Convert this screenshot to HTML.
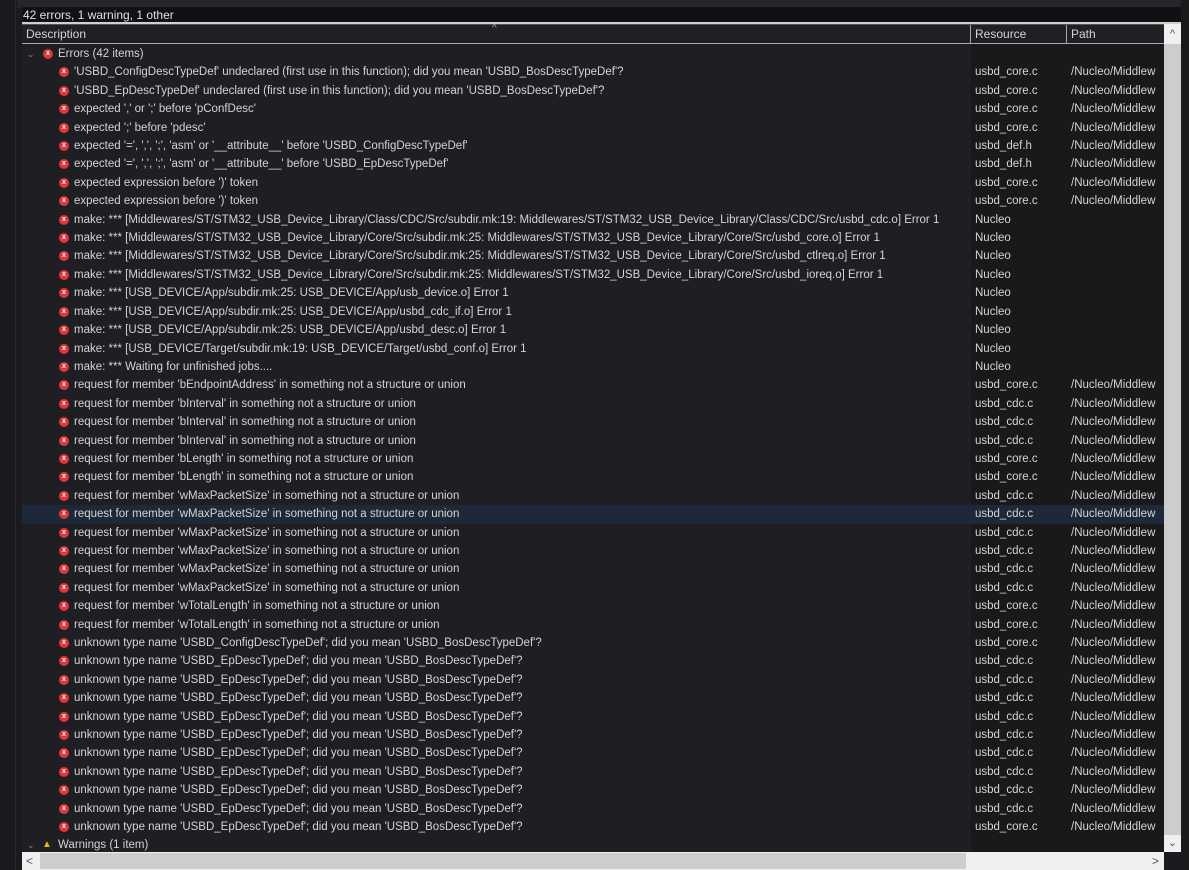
<!DOCTYPE html><html><head><meta charset="utf-8"><style>
*{margin:0;padding:0;box-sizing:border-box}
body{width:1189px;height:870px;background:#1b1b1f;font-family:"Liberation Sans",sans-serif;font-size:12px;color:#d4d4d4;position:relative;overflow:hidden}
.abs{position:absolute}
#left{left:0;top:0;width:16px;height:870px;background:#1a1a1d;border-right:1px solid #2c2c30}
#tabs{left:17px;top:0;width:1172px;height:8px;background:#26262a}
#status{left:22px;top:7px;width:1159px;height:16px;background:#111113;line-height:16px;padding-left:1px;color:#e0e0e0}
#line{left:22px;top:22px;width:1159px;height:2px;background:#d0d0d0}
#hdr{left:22px;top:24px;width:1142px;height:20px;background:#202024;border-bottom:1px solid #a8a8a8;border-top:1px solid #555}
.h{position:absolute;top:0;height:19px;line-height:19px;padding-left:4px;border-right:1px solid #a8a8a8}
#body{left:22px;top:44px;width:1142px;height:808px;background:#1f1f23;overflow:hidden}
#rescol{left:949px;top:0;width:193px;height:808px;background:#19191c}
.r{position:relative;height:18.42px;line-height:18px;white-space:nowrap;font-size:11.5px}
.r span{position:absolute;top:0}
.d{left:52px;max-width:895px;overflow:hidden}.rs{left:953px}.p{left:1049px}
.ic{position:absolute;width:10px;height:10px;border-radius:50%;background:#e0353d;top:4px;left:37px;color:#fff;font-size:7px;line-height:10px;text-align:center;font-weight:bold}
.sel{background:#1d2838}
#vs{left:1164px;top:24px;width:17px;height:828px;background:#cdcdcd}
#vsu{left:1164px;top:24px;width:17px;height:20px;background:#f0f0f0;color:#555;text-align:center;line-height:20px;font-size:11px}
#vsd{left:1164px;top:835px;width:17px;height:17px;background:#f0f0f0;color:#555;text-align:center;line-height:17px;font-size:11px}
#hs{left:22px;top:852px;width:1142px;height:18px;background:#f0f0f0}
#hst{left:40px;top:853px;width:926px;height:16px;background:#cdcdcd}
#rightdark{left:1181px;top:0;width:8px;height:870px;background:#1a1a1d}
</style></head><body>
<div class="abs" id="left"></div>
<div class="abs" id="tabs"></div>
<div class="abs" id="rightdark"></div>
<div class="abs" id="status">42 errors, 1 warning, 1 other</div>
<div class="abs" id="line"></div>
<div class="abs" id="hdr">
<div class="h" style="left:0;width:949px">Description<span style="position:absolute;left:470px;top:-6px;font-size:10px;color:#aaa">^</span></div>
<div class="h" style="left:949px;width:96px">Resource</div>
<div class="h" style="left:1045px;width:97px;border-right:none">Path</div>
</div>
<div class="abs" id="body">
<div class="abs" id="rescol"></div>
<div style="position:relative;top:1px">
<div class="r"><span style="left:5px;color:#888;font-size:9px">⌄</span><div class="ic" style="left:21px">x</div><span style="left:36px">Errors (42 items)</span></div>
<div class="r"><div class="ic">x</div><span class="d">'USBD_ConfigDescTypeDef' undeclared (first use in this function); did you mean 'USBD_BosDescTypeDef'?</span><span class="rs">usbd_core.c</span><span class="p">/Nucleo/Middlew</span></div>
<div class="r"><div class="ic">x</div><span class="d">'USBD_EpDescTypeDef' undeclared (first use in this function); did you mean 'USBD_BosDescTypeDef'?</span><span class="rs">usbd_core.c</span><span class="p">/Nucleo/Middlew</span></div>
<div class="r"><div class="ic">x</div><span class="d">expected ',' or ';' before 'pConfDesc'</span><span class="rs">usbd_core.c</span><span class="p">/Nucleo/Middlew</span></div>
<div class="r"><div class="ic">x</div><span class="d">expected ';' before 'pdesc'</span><span class="rs">usbd_core.c</span><span class="p">/Nucleo/Middlew</span></div>
<div class="r"><div class="ic">x</div><span class="d">expected '=', ',', ';', 'asm' or '__attribute__' before 'USBD_ConfigDescTypeDef'</span><span class="rs">usbd_def.h</span><span class="p">/Nucleo/Middlew</span></div>
<div class="r"><div class="ic">x</div><span class="d">expected '=', ',', ';', 'asm' or '__attribute__' before 'USBD_EpDescTypeDef'</span><span class="rs">usbd_def.h</span><span class="p">/Nucleo/Middlew</span></div>
<div class="r"><div class="ic">x</div><span class="d">expected expression before ')' token</span><span class="rs">usbd_core.c</span><span class="p">/Nucleo/Middlew</span></div>
<div class="r"><div class="ic">x</div><span class="d">expected expression before ')' token</span><span class="rs">usbd_core.c</span><span class="p">/Nucleo/Middlew</span></div>
<div class="r"><div class="ic">x</div><span class="d">make: *** [Middlewares/ST/STM32_USB_Device_Library/Class/CDC/Src/subdir.mk:19: Middlewares/ST/STM32_USB_Device_Library/Class/CDC/Src/usbd_cdc.o] Error 1</span><span class="rs">Nucleo</span></div>
<div class="r"><div class="ic">x</div><span class="d">make: *** [Middlewares/ST/STM32_USB_Device_Library/Core/Src/subdir.mk:25: Middlewares/ST/STM32_USB_Device_Library/Core/Src/usbd_core.o] Error 1</span><span class="rs">Nucleo</span></div>
<div class="r"><div class="ic">x</div><span class="d">make: *** [Middlewares/ST/STM32_USB_Device_Library/Core/Src/subdir.mk:25: Middlewares/ST/STM32_USB_Device_Library/Core/Src/usbd_ctlreq.o] Error 1</span><span class="rs">Nucleo</span></div>
<div class="r"><div class="ic">x</div><span class="d">make: *** [Middlewares/ST/STM32_USB_Device_Library/Core/Src/subdir.mk:25: Middlewares/ST/STM32_USB_Device_Library/Core/Src/usbd_ioreq.o] Error 1</span><span class="rs">Nucleo</span></div>
<div class="r"><div class="ic">x</div><span class="d">make: *** [USB_DEVICE/App/subdir.mk:25: USB_DEVICE/App/usb_device.o] Error 1</span><span class="rs">Nucleo</span></div>
<div class="r"><div class="ic">x</div><span class="d">make: *** [USB_DEVICE/App/subdir.mk:25: USB_DEVICE/App/usbd_cdc_if.o] Error 1</span><span class="rs">Nucleo</span></div>
<div class="r"><div class="ic">x</div><span class="d">make: *** [USB_DEVICE/App/subdir.mk:25: USB_DEVICE/App/usbd_desc.o] Error 1</span><span class="rs">Nucleo</span></div>
<div class="r"><div class="ic">x</div><span class="d">make: *** [USB_DEVICE/Target/subdir.mk:19: USB_DEVICE/Target/usbd_conf.o] Error 1</span><span class="rs">Nucleo</span></div>
<div class="r"><div class="ic">x</div><span class="d">make: *** Waiting for unfinished jobs....</span><span class="rs">Nucleo</span></div>
<div class="r"><div class="ic">x</div><span class="d">request for member 'bEndpointAddress' in something not a structure or union</span><span class="rs">usbd_core.c</span><span class="p">/Nucleo/Middlew</span></div>
<div class="r"><div class="ic">x</div><span class="d">request for member 'bInterval' in something not a structure or union</span><span class="rs">usbd_cdc.c</span><span class="p">/Nucleo/Middlew</span></div>
<div class="r"><div class="ic">x</div><span class="d">request for member 'bInterval' in something not a structure or union</span><span class="rs">usbd_cdc.c</span><span class="p">/Nucleo/Middlew</span></div>
<div class="r"><div class="ic">x</div><span class="d">request for member 'bInterval' in something not a structure or union</span><span class="rs">usbd_cdc.c</span><span class="p">/Nucleo/Middlew</span></div>
<div class="r"><div class="ic">x</div><span class="d">request for member 'bLength' in something not a structure or union</span><span class="rs">usbd_core.c</span><span class="p">/Nucleo/Middlew</span></div>
<div class="r"><div class="ic">x</div><span class="d">request for member 'bLength' in something not a structure or union</span><span class="rs">usbd_core.c</span><span class="p">/Nucleo/Middlew</span></div>
<div class="r"><div class="ic">x</div><span class="d">request for member 'wMaxPacketSize' in something not a structure or union</span><span class="rs">usbd_cdc.c</span><span class="p">/Nucleo/Middlew</span></div>
<div class="r sel"><div class="ic">x</div><span class="d">request for member 'wMaxPacketSize' in something not a structure or union</span><span class="rs">usbd_cdc.c</span><span class="p">/Nucleo/Middlew</span></div>
<div class="r"><div class="ic">x</div><span class="d">request for member 'wMaxPacketSize' in something not a structure or union</span><span class="rs">usbd_cdc.c</span><span class="p">/Nucleo/Middlew</span></div>
<div class="r"><div class="ic">x</div><span class="d">request for member 'wMaxPacketSize' in something not a structure or union</span><span class="rs">usbd_cdc.c</span><span class="p">/Nucleo/Middlew</span></div>
<div class="r"><div class="ic">x</div><span class="d">request for member 'wMaxPacketSize' in something not a structure or union</span><span class="rs">usbd_cdc.c</span><span class="p">/Nucleo/Middlew</span></div>
<div class="r"><div class="ic">x</div><span class="d">request for member 'wMaxPacketSize' in something not a structure or union</span><span class="rs">usbd_cdc.c</span><span class="p">/Nucleo/Middlew</span></div>
<div class="r"><div class="ic">x</div><span class="d">request for member 'wTotalLength' in something not a structure or union</span><span class="rs">usbd_core.c</span><span class="p">/Nucleo/Middlew</span></div>
<div class="r"><div class="ic">x</div><span class="d">request for member 'wTotalLength' in something not a structure or union</span><span class="rs">usbd_core.c</span><span class="p">/Nucleo/Middlew</span></div>
<div class="r"><div class="ic">x</div><span class="d">unknown type name 'USBD_ConfigDescTypeDef'; did you mean 'USBD_BosDescTypeDef'?</span><span class="rs">usbd_core.c</span><span class="p">/Nucleo/Middlew</span></div>
<div class="r"><div class="ic">x</div><span class="d">unknown type name 'USBD_EpDescTypeDef'; did you mean 'USBD_BosDescTypeDef'?</span><span class="rs">usbd_cdc.c</span><span class="p">/Nucleo/Middlew</span></div>
<div class="r"><div class="ic">x</div><span class="d">unknown type name 'USBD_EpDescTypeDef'; did you mean 'USBD_BosDescTypeDef'?</span><span class="rs">usbd_cdc.c</span><span class="p">/Nucleo/Middlew</span></div>
<div class="r"><div class="ic">x</div><span class="d">unknown type name 'USBD_EpDescTypeDef'; did you mean 'USBD_BosDescTypeDef'?</span><span class="rs">usbd_cdc.c</span><span class="p">/Nucleo/Middlew</span></div>
<div class="r"><div class="ic">x</div><span class="d">unknown type name 'USBD_EpDescTypeDef'; did you mean 'USBD_BosDescTypeDef'?</span><span class="rs">usbd_cdc.c</span><span class="p">/Nucleo/Middlew</span></div>
<div class="r"><div class="ic">x</div><span class="d">unknown type name 'USBD_EpDescTypeDef'; did you mean 'USBD_BosDescTypeDef'?</span><span class="rs">usbd_cdc.c</span><span class="p">/Nucleo/Middlew</span></div>
<div class="r"><div class="ic">x</div><span class="d">unknown type name 'USBD_EpDescTypeDef'; did you mean 'USBD_BosDescTypeDef'?</span><span class="rs">usbd_cdc.c</span><span class="p">/Nucleo/Middlew</span></div>
<div class="r"><div class="ic">x</div><span class="d">unknown type name 'USBD_EpDescTypeDef'; did you mean 'USBD_BosDescTypeDef'?</span><span class="rs">usbd_cdc.c</span><span class="p">/Nucleo/Middlew</span></div>
<div class="r"><div class="ic">x</div><span class="d">unknown type name 'USBD_EpDescTypeDef'; did you mean 'USBD_BosDescTypeDef'?</span><span class="rs">usbd_cdc.c</span><span class="p">/Nucleo/Middlew</span></div>
<div class="r"><div class="ic">x</div><span class="d">unknown type name 'USBD_EpDescTypeDef'; did you mean 'USBD_BosDescTypeDef'?</span><span class="rs">usbd_cdc.c</span><span class="p">/Nucleo/Middlew</span></div>
<div class="r"><div class="ic">x</div><span class="d">unknown type name 'USBD_EpDescTypeDef'; did you mean 'USBD_BosDescTypeDef'?</span><span class="rs">usbd_core.c</span><span class="p">/Nucleo/Middlew</span></div>
<div class="r"><span style="left:5px;color:#888;font-size:9px">⌄</span><span style="left:20px;color:#e8b020;font-size:10px">▲</span><span style="left:36px">Warnings (1 item)</span></div>
</div>
</div>
<div class="abs" id="vs"></div>
<div class="abs" id="vsu">^</div>
<div class="abs" id="vsd">⌄</div>
<div class="abs" id="hs"></div>
<div class="abs" id="hst"></div>
<div class="abs" style="left:26px;top:852px;color:#555;font-size:12px;line-height:18px">&lt;</div>
<div class="abs" style="left:1152px;top:852px;color:#555;font-size:12px;line-height:18px">&gt;</div>
</body></html>
